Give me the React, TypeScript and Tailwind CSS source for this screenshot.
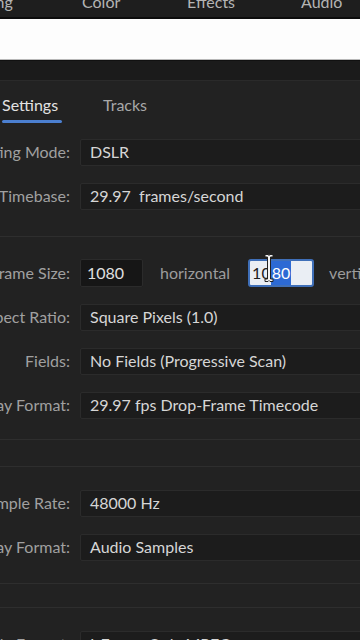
import React from "react";

function Row({ label, value }: { label: string; value: string }) {
  return (
    <div className="h-[44px] flex items-center">
      <div className="w-[70px] shrink-0 flex justify-end overflow-hidden">
        <span className="whitespace-nowrap text-[16px] text-[#a0a0a0] shrink-0">{label}</span>
      </div>
      <div className="ml-[10px] h-[27px] w-[300px] shrink-0 bg-[#1c1c1c] border border-[#2b2b2b] rounded-[2px] flex items-center pl-[9px]">
        <span className="whitespace-pre text-[16px] text-[#d6d6d6]">{value}</span>
      </div>
    </div>
  );
}

function Sep({ className }: { className: string }) {
  return <div className={"h-px bg-[#2e2e2e] " + className} />;
}

export default function App() {
  return (
    <div className="w-[360px] h-[640px] overflow-hidden bg-[#222222] font-['Lato',sans-serif]">
      {/* top menu bar */}
      <div className="h-[17px] bg-[#1e1e1e] overflow-hidden">
        <div className="flex -ml-[36px] -mt-[6px] text-[16px] leading-[16px] text-[#b4b4b4] whitespace-nowrap">
          <span className="w-[118px] shrink-0">Editing</span>
          <span className="w-[105px] shrink-0">Color</span>
          <span className="w-[114px] shrink-0">Effects</span>
          <span className="w-[80px] shrink-0">Audio</span>
        </div>
      </div>
      <div className="h-[2px] bg-[#0c0c0c]" />
      <div className="h-[40px] bg-[#fdfdfd]" />
      <div className="h-px bg-[#b8b8b8]" />
      <div className="h-px bg-[#111111]" />
      <div className="h-[19px] bg-[#1b1b1b]" />
      <div className="h-px bg-[#2a2a2a]" />
      {/* tabs */}
      <div className="h-[49px] flex items-start pt-[14px]">
        <div className="ml-[2px] w-[60px] flex flex-col">
          <span className="text-[16px] leading-[20px] text-[#e2e2e2]">Settings</span>
          <div className="mt-[5px] h-[3px] bg-[#4b7fd0] rounded-full" />
        </div>
        <span className="ml-[41px] text-[16px] leading-[20px] text-[#a8a8a8]">Tracks</span>
      </div>
      <Row label="Editing Mode:" value="DSLR" />
      <Row label="Timebase:" value="29.97  frames/second" />
      <Sep className="mt-[18px]" />
      {/* frame size */}
      <div className="mt-[14px] h-[44px] flex items-center">
        <div className="w-[70px] shrink-0 flex justify-end overflow-hidden">
          <span className="whitespace-nowrap text-[16px] text-[#a0a0a0] shrink-0">Frame Size:</span>
        </div>
        <div className="ml-[10px] h-[28px] w-[63px] shrink-0 bg-[#161616] border border-[#2b2b2b] rounded-[2px] flex items-center pl-[6px]">
          <span className="text-[16px] text-[#e0e0e0]">1080</span>
        </div>
        <span className="ml-[17px] text-[16px] text-[#9c9c9c]">horizontal</span>
        <div className="ml-[18px] relative h-[28px] w-[66px] shrink-0 bg-[#eaeef4] border-2 border-[#3f6fb8] rounded-[3px] flex items-center pl-[2px]">
          <span className="text-[16px] text-[#202020]">10</span>
          <span className="text-[16px] text-white bg-[#2d6ad4] px-[1px]">80</span>
          <svg className="absolute left-[13px] -top-[8px]" width="12" height="30" viewBox="0 0 12 30">
            <path d="M2 1.5h3l1 1 1-1h3v2.5h-2.5v22h2.5v2.5h-3l-1-1-1 1h-3v-2.5h2.5v-22h-2.5z" fill="#f4f4f4" stroke="#222" strokeWidth="1" />
          </svg>
        </div>
        <span className="ml-[15px] text-[16px] text-[#9c9c9c] whitespace-nowrap">vertical</span>
      </div>
      <Row label="Pixel Aspect Ratio:" value="Square Pixels (1.0)" />
      <Row label="Fields:" value="No Fields (Progressive Scan)" />
      <Row label="Display Format:" value="29.97 fps Drop-Frame Timecode" />
      <Sep className="mt-[12px]" />
      <Sep className="mt-[26px]" />
      <div className="mt-[14px]" />
      <Row label="Sample Rate:" value="48000 Hz" />
      <Row label="Display Format:" value="Audio Samples" />
      <Sep className="mt-[14px]" />
      <Sep className="mt-[23px]" />
      <div className="mt-[14px]" />
      <Row label="Preview File Format:" value="I-Frame Only MPEG" />
    </div>
  );
}
